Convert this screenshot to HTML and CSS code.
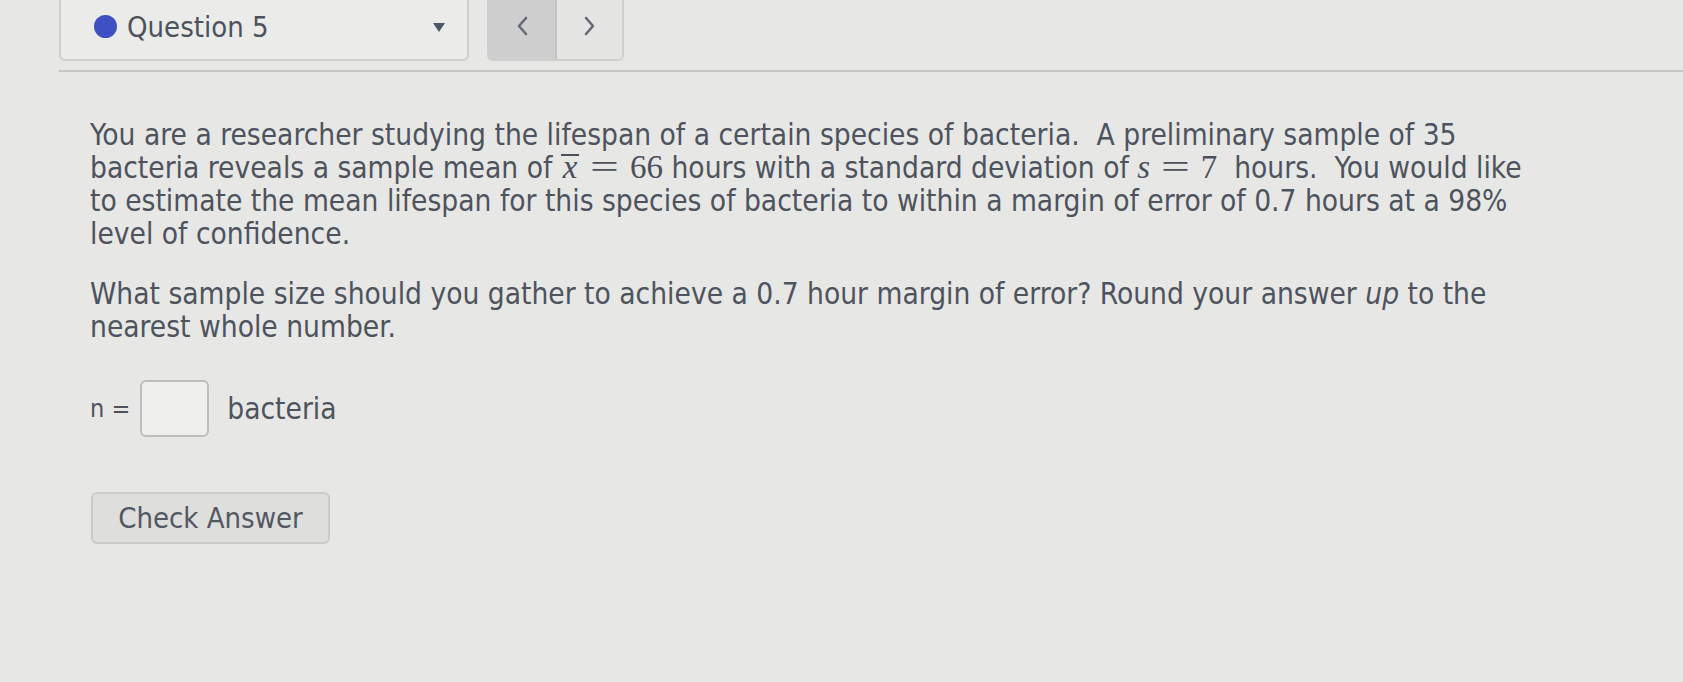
FILE: index.html
```html
<!DOCTYPE html>
<html>
<head>
<meta charset="utf-8">
<link rel="stylesheet" href="styles.css">
</head>
<body>
<div class="page">
  <div class="header">
    <div class="qselect">
      <span class="dot"></span>
      <span class="qlabel">Question 5</span>
      <svg class="caret" width="12" height="9" viewBox="0 0 12 9"><path d="M0 0 L12 0 L6 9 Z" fill="#4c5866"/></svg>
    </div>
    <div class="nav">
      <div class="navbtn prev"><svg width="12" height="20" viewBox="0 0 12 20"><path d="M10 2 L3 10 L10 18" fill="none" stroke="#656a74" stroke-width="2.6" stroke-linecap="round" stroke-linejoin="round"/></svg></div>
      <div class="navbtn next"><svg width="12" height="20" viewBox="0 0 12 20"><path d="M2 2 L9 10 L2 18" fill="none" stroke="#656a74" stroke-width="2.6" stroke-linecap="round" stroke-linejoin="round"/></svg></div>
    </div>
  </div>
  <div class="rule"></div>
  <div class="content">
    <p class="para">You are a researcher studying the lifespan of a certain species of bacteria.&nbsp; A preliminary sample of 35<br>bacteria reveals a sample mean of <span class="math"><span class="mi bar">x</span><span class="mo">=</span><span class="mn">66</span></span> hours with a standard deviation of <span class="math"><span class="mi">s</span><span class="mo">=</span><span class="mn">7</span></span>&nbsp; hours.&nbsp; You would like<br>to estimate the mean lifespan for this species of bacteria to within a margin of error of 0.7 hours at a 98%<br>level of confidence.</p>
    <p class="para">What sample size should you gather to achieve a 0.7 hour margin of error? Round your answer <em>up</em> to the<br>nearest whole number.</p>
    <div class="answer">
      <span class="nlabel">n =</span>
      <span class="inputbox"></span>
      <span class="unit">bacteria</span>
    </div>
    <button class="check">Check Answer</button>
  </div>
</div>
</body>
</html>
```
FILE: styles.css
```css
html, body {
  margin: 0;
  padding: 0;
}
body {
  background: #e7e7e5;
  color: #4e535d;
  font-family: "DejaVu Sans Condensed", "DejaVu Sans", sans-serif;
  font-stretch: condensed;
  width: 1683px;
  height: 682px;
  overflow: hidden;
}
.header {
  display: flex;
  align-items: flex-start;
  padding-left: 59px;
  gap: 18px;
}
.qselect {
  width: 410px;
  height: 61px;
  box-sizing: border-box;
  border: 2px solid #cfcfcd;
  border-top: 0;
  border-radius: 0 0 6px 6px;
  background: #ebebe9;
  display: flex;
  align-items: center;
  padding: 0 22px 6px 33px;
}
.dot {
  width: 23px;
  height: 23px;
  border-radius: 50%;
  background: #3f50c2;
  flex: none;
}
.qlabel {
  font-size: 29px;
  margin-left: 10px;
  color: #4d525c;
  flex: 1;
}
.caret {
  margin-top: 2px;
}
.nav {
  display: flex;
  height: 61px;
  box-sizing: border-box;
  border: 2px solid #cfcfcd;
  border-top: 0;
  border-radius: 0 0 6px 6px;
  overflow: hidden;
}
.navbtn {
  display: flex;
  align-items: center;
  justify-content: center;
  padding-bottom: 8px;
  box-sizing: border-box;
}
.prev {
  width: 68px;
  background: #cfcfcf;
  border-right: 2px solid #c4c4c4;
}
.next {
  width: 65px;
  background: #e5e5e3;
}
.rule {
  margin: 9px 0 0 59px;
  height: 2px;
  background: #c6c6c4;
}
.content {
  padding: 47px 0 0 90px;
}
.para {
  margin: 0 0 27px;
  font-size: 29.6px;
  line-height: 33px;
  white-space: nowrap;
}
.para em {
  font-style: italic;
}
.math {
  font-family: "Liberation Serif", "DejaVu Serif", serif;
  font-stretch: normal;
  font-size: 33px;
  line-height: 20px;
  color: #4b505a;
}
.mi {
  font-style: italic;
}
.bar {
  display: inline-block;
  line-height: 22px;
  border-top: 2px solid #4b505a;
  padding: 0 2px;
}
.mo {
  display: inline-block;
  margin: 0 16px;
  transform: scaleX(1.55);
}
.answer {
  display: flex;
  align-items: center;
  margin-top: 36px;
  height: 57px;
}
.nlabel {
  font-size: 25px;
}
.inputbox {
  width: 69px;
  height: 57px;
  box-sizing: border-box;
  border: 2px solid #bdbdbd;
  border-radius: 6px;
  background: #efefed;
  margin: 0 18px 0 10px;
}
.unit {
  font-size: 29.6px;
}
.check {
  display: block;
  margin: 55px 0 0 1px;
  width: 239px;
  height: 52px;
  border: 2px solid #cbcbc9;
  border-radius: 6px;
  background: #dededc;
  color: #535862;
  font-family: "DejaVu Sans Condensed", "DejaVu Sans", sans-serif;
  font-stretch: condensed;
  font-size: 29px;
  padding: 0;
}
```
